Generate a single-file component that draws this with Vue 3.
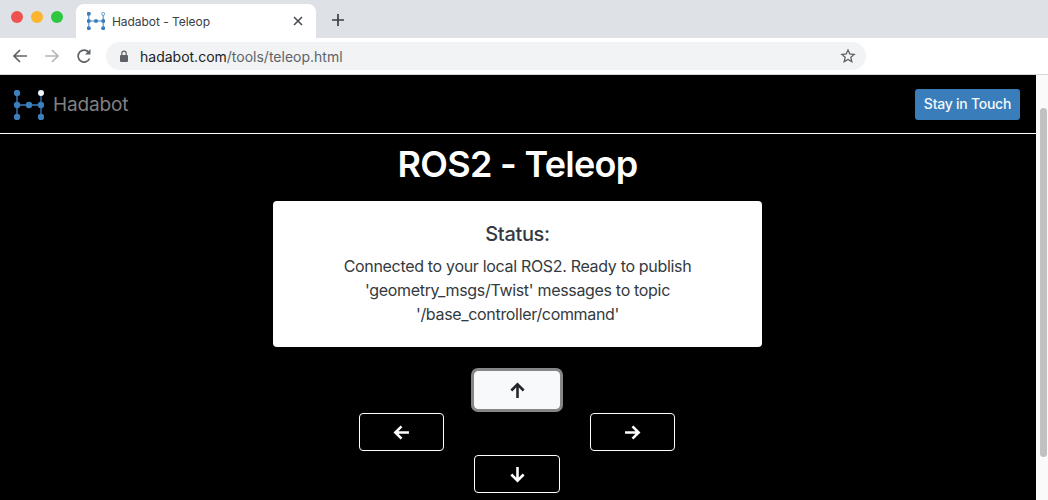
<template>
  <div class="window">
    <div class="tabstrip">
      <div class="traffic">
        <span class="light red" />
        <span class="light amber" />
        <span class="light green" />
      </div>
      <div class="tab">
        <svg class="favicon" width="18" height="18" viewBox="0 0 30 30">
          <path d="M3 3V27M3 15H27M27 3V27" stroke="#3b7fbd" stroke-width="1.600" fill="none" />
          <circle v-for="n in nodes" :key="n.join()" :cx="n[0]" :cy="n[1]" r="3.400" fill="#3b7fbd" />
          <circle cx="27" cy="3" r="2.600" fill="#fff" stroke="#3b7fbd" stroke-width="1.200" />
        </svg>
        <span class="tab-title">Hadabot - Teleop</span>
        <svg class="tab-close" width="10" height="10" viewBox="0 0 10 10">
          <path d="M1 1L9 9M9 1L1 9" stroke="#45484d" stroke-width="1.500" />
        </svg>
      </div>
      <svg class="new-tab" width="12" height="12" viewBox="0 0 12 12">
        <path d="M6 0V12M0 6H12" stroke="#3c4043" stroke-width="1.700" />
      </svg>
    </div>

    <div class="toolbar">
      <svg class="nav-icon" width="16" height="16" viewBox="0 0 16 16" fill="none">
        <path d="M15 8H2M8 2L2 8L8 14" stroke="#5f6368" stroke-width="1.700" />
      </svg>
      <svg class="nav-icon" width="16" height="16" viewBox="0 0 16 16" fill="none">
        <path d="M1 8H14M8 2L14 8L8 14" stroke="#b4b6b9" stroke-width="1.700" />
      </svg>
      <svg class="nav-icon" width="16" height="16" viewBox="0 0 16 16" fill="none">
        <path d="M13.600 10.500A6 6 0 1 1 13 4.600" stroke="#5f6368" stroke-width="1.700" />
        <path d="M14.500 1V6.500H9" fill="#5f6368" />
      </svg>
      <div class="omnibox">
        <svg width="10" height="12" viewBox="0 0 10 12">
          <rect x="1" y="5" width="8" height="7" rx="1" fill="#5f6368" />
          <path d="M2.800 5V3.400a2.200 2.200 0 0 1 4.400 0V5" stroke="#5f6368" stroke-width="1.200" fill="none" />
        </svg>
        <span class="url"><b>hadabot.com</b>/tools/teleop.html</span>
        <svg class="star" width="16" height="16" viewBox="0 0 24 24" fill="none">
          <path d="M12 3l2.700 6 6.500.7-4.900 4.300 1.400 6.400L12 17.100l-5.700 3.300 1.400-6.400L2.800 9.700l6.500-.7z" stroke="#5f6368" stroke-width="2" />
        </svg>
      </div>
    </div>

    <div class="viewport">
      <div class="page">
        <nav class="navbar">
          <div class="brand">
            <svg width="30" height="30" viewBox="0 0 30 30">
              <path d="M3 3V27M3 15H27M27 3V27" stroke="#3b7fbd" stroke-width="1.300" fill="none" />
              <circle v-for="n in nodes" :key="n.join()" :cx="n[0]" :cy="n[1]" r="3.200" fill="#3b7fbd" />
              <circle cx="27" cy="3" r="3" fill="#f2f7fb" />
            </svg>
            <span class="brand-name">Hadabot</span>
          </div>
          <button class="touch">Stay in Touch</button>
        </nav>

        <h1>ROS2 - Teleop</h1>

        <div class="card">
          <h5>Status:</h5>
          <p>Connected to your local ROS2. Ready to publish 'geometry_msgs/Twist' messages to topic '/base_controller/command'</p>
        </div>

        <div class="pad">
          <button v-for="k in keys" :key="k.name" class="key" :class="k.name">
            <svg width="17" height="17" viewBox="0 0 16 16" fill="none" :style="{ transform: `rotate(${k.angle}deg)` }">
              <path d="M8 15V2.500M2.200 8L8 2.200L13.800 8" stroke="currentColor" stroke-width="2.400" />
            </svg>
          </button>
        </div>
      </div>

      <div class="scrollbar">
        <div class="thumb" />
      </div>
    </div>
  </div>
</template>

<script setup>
const nodes = [[3, 3], [3, 15], [3, 27], [15, 15], [27, 15], [27, 27]]

const keys = [
  { name: 'up', angle: 0 },
  { name: 'left', angle: -90 },
  { name: 'right', angle: 90 },
  { name: 'down', angle: 180 },
]
</script>

<style>
  html, body {
    margin: 0;
    height: 500px;
    overflow: hidden;
  }
</style>

<style scoped>
  .window {
    width: 1048px;
    height: 500px;
    display: flex;
    flex-direction: column;
    overflow: hidden;
    font-family: Inter, 'Liberation Sans', sans-serif;
  }

  /* Browser chrome */
  .tabstrip {
    height: 38px;
    flex: none;
    background: #dee1e6;
    display: flex;
    align-items: flex-end;
    box-sizing: border-box;
  }

  .traffic {
    display: flex;
    gap: 8px;
    padding: 0 0 15px 11px;
    width: 76px;
    box-sizing: border-box;
  }

  .light {
    width: 12px;
    height: 12px;
    border-radius: 50%;
  }

  .red { background: #f0524f; }
  .amber { background: #fbb52e; }
  .green { background: #2ec840; }

  .tab {
    width: 240px;
    height: 34px;
    background: #fff;
    border-radius: 8px 8px 0 0;
    display: flex;
    align-items: center;
    padding: 0 12px 0 11px;
    box-sizing: border-box;
  }

  .tab-title {
    font-size: 12px;
    color: #3c4043;
    margin-left: 7px;
    flex: 1;
    letter-spacing: -0.05px;
  }

  .tab-close {
    margin-right: 1px;
  }

  .new-tab {
    margin: 0 0 12px 16px;
  }

  .toolbar {
    height: 37px;
    flex: none;
    background: #fff;
    border-bottom: 1px solid #d5d7da;
    box-sizing: border-box;
    display: flex;
    align-items: center;
    padding-left: 12px;
  }

  .nav-icon {
    margin-right: 16px;
  }

  .omnibox {
    width: 760px;
    height: 28px;
    margin-left: -2px;
    border-radius: 14px;
    background: #f1f3f4;
    display: flex;
    align-items: center;
    padding: 0 10px 0 13px;
    box-sizing: border-box;
  }

  .url {
    font-size: 14px;
    color: #5f6368;
    margin-left: 11px;
    flex: 1;
  }

  .url b {
    font-weight: 400;
    color: #202124;
  }

  /* Page */
  .viewport {
    flex: 1;
    display: flex;
    min-height: 0;
  }

  .page {
    width: 1036px;
    flex: none;
    box-sizing: border-box;
    padding-right: 1px;
    background: #000;
    display: flex;
    flex-direction: column;
    align-items: center;
  }

  .navbar {
    width: 1036px;
    height: 59px;
    flex: none;
    align-self: flex-start;
    box-sizing: border-box;
    border-bottom: 1px solid #fff;
    display: flex;
    align-items: center;
    justify-content: space-between;
    padding: 0 16px 0 14px;
  }

  .brand {
    display: flex;
    align-items: center;
    gap: 9px;
  }

  .brand svg {
    margin-top: 2px;
  }

  .brand-name {
    font-size: 19px;
    letter-spacing: -0.15px;
    color: #808080;
  }

  .touch {
    width: 105px;
    height: 31px;
    border: 0;
    border-radius: 3px;
    background: #3a7dbb;
    color: #f4f8fb;
    font-family: inherit;
    font-size: 14px;
    font-weight: 500;
    letter-spacing: -0.25px;
    padding: 0 0 2px;
  }

  h1 {
    margin: 8px 0 0;
    font-size: 36px;
    line-height: 44px;
    font-weight: 600;
    letter-spacing: -0.7px;
    color: #fff;
  }

  .card {
    width: 489px;
    height: 146px;
    margin-top: 15px;
    flex: none;
    box-sizing: border-box;
    background: #fff;
    border-radius: 4px;
    padding: 21px 40px;
    text-align: center;
    color: #343a40;
  }

  h5 {
    margin: 0 0 8px;
    font-size: 20px;
    line-height: 24px;
    font-weight: 500;
    letter-spacing: -0.35px;
  }

  p {
    margin: 0;
    font-size: 16px;
    line-height: 24px;
    letter-spacing: -0.32px;
  }

  .pad {
    margin: 24px 1px 0 0;
    display: grid;
    grid-template-columns: 85px 86px 85px;
    grid-template-rows: 38px 38px 38px;
    column-gap: 30px;
    row-gap: 4px;
  }

  .key {
    background: #000;
    color: #fff;
    border: 1px solid #fff;
    border-radius: 4px;
    padding: 0;
    display: flex;
    align-items: center;
    justify-content: center;
  }

  .up {
    grid-column: 2;
    grid-row: 1;
    background: #f8f9fa;
    color: #212529;
    border-color: #f8f9fa;
    box-shadow: 0 0 0 3px #868686;
  }

  .left { grid-column: 1; grid-row: 2; }
  .right { grid-column: 3; grid-row: 2; }
  .down { grid-column: 2; grid-row: 3; }

  .scrollbar {
    flex: 1;
    background: #fafafa;
    padding: 33px 1px 0 4px;
  }

  .thumb {
    height: 349px;
    border-radius: 4px;
    background: #c1c1c1;
  }
</style>
